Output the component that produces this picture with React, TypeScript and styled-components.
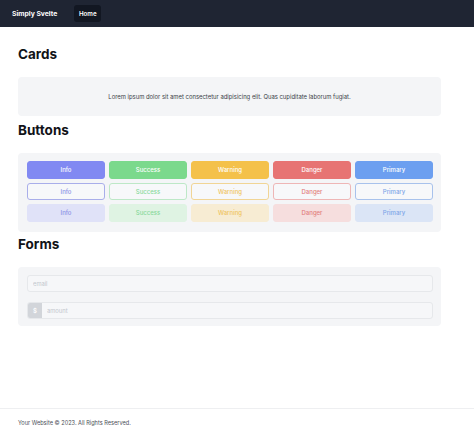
import React from 'react'
import styled, { createGlobalStyle } from 'styled-components'

const fontFamily = "Inter, 'Noto Sans', 'Liberation Sans', sans-serif"

const GlobalStyle = createGlobalStyle`
  html, body {
    margin: 0;
    padding: 0;
    background: #ffffff;
    font-family: ${fontFamily};
  }
  * {
    box-sizing: border-box;
  }
`

type Variant = 'info' | 'success' | 'warning' | 'danger' | 'primary'
type Kind = 'solid' | 'outline' | 'light'

const palette: Record<Variant, { main: string; text: string; light: string; border: string }> = {
  info: { main: '#8189f2', text: '#8d93e6', light: '#e0e2f8', border: '#a9aeea' },
  success: { main: '#7bd98c', text: '#86d89a', light: '#dff3e3', border: '#bde8c7' },
  warning: { main: '#f4c14a', text: '#efc45f', light: '#f7ecd3', border: '#f1d595' },
  danger: { main: '#e77473', text: '#e27d7d', light: '#f6dede', border: '#eeb6b6' },
  primary: { main: '#6c9ff0', text: '#7ea6e8', light: '#dbe5f6', border: '#a8c2ec' },
}

const Page = styled.div`
  min-height: 100vh;
  display: flex;
  flex-direction: column;
`

const NavBar = styled.nav`
  height: 27px;
  background: #1f2533;
  display: flex;
  align-items: center;
  padding: 0 12px;
  gap: 17px;
`

const Brand = styled.span`
  color: #ffffff;
  font-size: 6.8px;
  font-weight: 700;
`

const NavLink = styled.a`
  display: flex;
  align-items: center;
  justify-content: center;
  width: 27px;
  height: 17px;
  border-radius: 3px;
  background: #121722;
  color: #ffffff;
  font-size: 6.2px;
  font-weight: 600;
`

const Main = styled.main`
  width: 441px;
  padding: 19px 0 0 18px;
  display: flex;
  flex-direction: column;
`

const Heading = styled.h2<{ $top: number }>`
  margin: ${({ $top }) => $top}px 0 14px;
  font-size: 13.5px;
  line-height: 17px;
  font-weight: 700;
  color: #111318;
`

const Panel = styled.section`
  background: #f4f5f7;
  border-radius: 4px;
`

const CardBody = styled(Panel)`
  height: 39px;
  display: flex;
  align-items: center;
  justify-content: center;
  font-size: 5.9px;
  color: #3b3f47;
`

const ButtonGrid = styled(Panel)`
  padding: 8px 8px 10px 9px;
  display: grid;
  grid-template-columns: repeat(5, 1fr);
  gap: 4px;
`

const Button = styled.button<{ $variant: Variant; $kind: Kind }>`
  height: 17.5px;
  border-radius: 3px;
  font-family: ${fontFamily};
  font-size: 6px;
  font-weight: 500;
  padding: 0;
  cursor: pointer;
  border: 1px solid
    ${({ $variant, $kind }) =>
      $kind === 'solid'
        ? palette[$variant].main
        : $kind === 'outline'
          ? palette[$variant].border
          : palette[$variant].light};
  background: ${({ $variant, $kind }) =>
    $kind === 'solid' ? palette[$variant].main : $kind === 'outline' ? '#f7f8fa' : palette[$variant].light};
  color: ${({ $variant, $kind }) => ($kind === 'solid' ? '#ffffff' : palette[$variant].text)};
`

const FormPanel = styled(Panel)`
  padding: 8px 8px 7px 9px;
  display: flex;
  flex-direction: column;
  gap: 10px;
`

const InputGroup = styled.div`
  display: flex;
  height: 17px;
  border: 1px solid #e6e8eb;
  border-radius: 3px;
  overflow: hidden;
  background: #f6f7f9;
`

const Addon = styled.span`
  width: 14px;
  display: flex;
  align-items: center;
  justify-content: center;
  background: #d2d5da;
  color: #ffffff;
  font-size: 6px;
  font-weight: 600;
`

const Input = styled.input`
  flex: 1;
  min-width: 0;
  border: none;
  outline: none;
  background: transparent;
  padding: 0 5px;
  font-family: ${fontFamily};
  font-size: 5.8px;
  color: #333;
  &::placeholder {
    color: #c3c7ce;
  }
`

const Footer = styled.footer`
  margin-top: auto;
  border-top: 1px solid #eeeff1;
  padding: 11px 18px 9px;
  font-size: 5.6px;
  color: #4a4e56;
`

const variants: Variant[] = ['info', 'success', 'warning', 'danger', 'primary']
const kinds: Kind[] = ['solid', 'outline', 'light']
const label = (v: Variant) => v.charAt(0).toUpperCase() + v.slice(1)

export default function App() {
  return (
    <Page>
      <GlobalStyle />
      <NavBar>
        <Brand>Simply Svelte</Brand>
        <NavLink>Home</NavLink>
      </NavBar>
      <Main>
        <Heading $top={0}>Cards</Heading>
        <CardBody>Lorem ipsum dolor sit amet consectetur adipisicing elit. Quas cupiditate laborum fugiat.</CardBody>

        <Heading $top={6}>Buttons</Heading>
        <ButtonGrid>
          {kinds.map((k) =>
            variants.map((v) => (
              <Button key={k + v} $variant={v} $kind={k}>
                {label(v)}
              </Button>
            )),
          )}
        </ButtonGrid>

        <Heading $top={4}>Forms</Heading>
        <FormPanel>
          <InputGroup>
            <Input placeholder="email" />
          </InputGroup>
          <InputGroup>
            <Addon>$</Addon>
            <Input placeholder="amount" />
          </InputGroup>
        </FormPanel>
      </Main>
      <Footer>Your Website © 2023. All Rights Reserved.</Footer>
    </Page>
  )
}
